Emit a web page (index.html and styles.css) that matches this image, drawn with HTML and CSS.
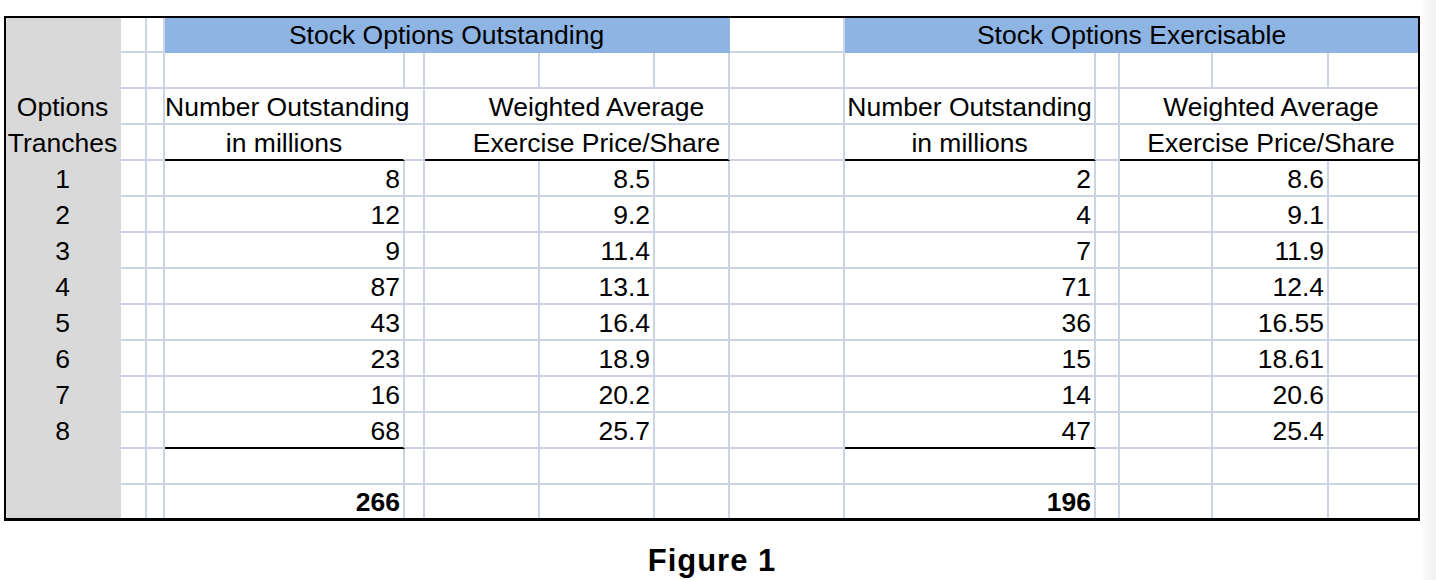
FILE: index.html
```html
<!DOCTYPE html>
<html lang="en">
<head>
<meta charset="utf-8">
<title>Figure 1 – Stock Options</title>
<link rel="stylesheet" href="styles.css">
</head>
<body>
<figure class="fig">
<table class="sheet">
  <colgroup>
    <col class="w-a"><col class="w-b"><col class="w-c"><col class="w-d"><col class="w-e">
    <col class="w-f"><col class="w-g"><col class="w-h"><col class="w-i"><col class="w-j">
    <col class="w-k"><col class="w-l"><col class="w-m"><col class="w-n">
  </colgroup>
  <tr class="r-top">
    <td class="a"></td><td></td><td></td>
    <td colspan="5" class="blue">Stock Options Outstanding</td>
    <td></td>
    <td colspan="5" class="blue last">Stock Options Exercisable</td>
  </tr>
  <tr>
    <td class="a"></td><td></td><td></td><td></td><td></td><td></td><td></td><td></td><td></td><td></td><td></td><td></td><td></td><td class="last"></td>
  </tr>
  <tr>
    <td class="a ctr">Options</td><td></td><td></td>
    <td colspan="2" class="ctr pad-de">Number Outstanding</td>
    <td colspan="3" class="ctr pad-fh">Weighted Average</td>
    <td></td>
    <td class="ctr">Number Outstanding</td>
    <td></td>
    <td colspan="3" class="ctr pad-ln last">Weighted Average</td>
  </tr>
  <tr>
    <td class="a ctr">Tranches</td><td></td><td></td>
    <td class="ctr ul hide-r">in millions</td><td></td>
    <td colspan="3" class="ctr pad-fh ul">Exercise Price/Share</td>
    <td></td>
    <td class="ctr ul">in millions</td>
    <td></td>
    <td colspan="3" class="ctr pad-ln ul last">Exercise Price/Share</td>
  </tr>
  <tr>
    <td class="a ctr">1</td><td></td><td></td><td class="num">8</td><td></td><td></td><td class="num">8.5</td><td></td><td></td><td class="num">2</td><td></td><td></td><td class="num">8.6</td><td class="last"></td>
  </tr>
  <tr>
    <td class="a ctr">2</td><td></td><td></td><td class="num">12</td><td></td><td></td><td class="num">9.2</td><td></td><td></td><td class="num">4</td><td></td><td></td><td class="num">9.1</td><td class="last"></td>
  </tr>
  <tr>
    <td class="a ctr">3</td><td></td><td></td><td class="num">9</td><td></td><td></td><td class="num">11.4</td><td></td><td></td><td class="num">7</td><td></td><td></td><td class="num">11.9</td><td class="last"></td>
  </tr>
  <tr>
    <td class="a ctr">4</td><td></td><td></td><td class="num">87</td><td></td><td></td><td class="num">13.1</td><td></td><td></td><td class="num">71</td><td></td><td></td><td class="num">12.4</td><td class="last"></td>
  </tr>
  <tr>
    <td class="a ctr">5</td><td></td><td></td><td class="num">43</td><td></td><td></td><td class="num">16.4</td><td></td><td></td><td class="num">36</td><td></td><td></td><td class="num">16.55</td><td class="last"></td>
  </tr>
  <tr>
    <td class="a ctr">6</td><td></td><td></td><td class="num">23</td><td></td><td></td><td class="num">18.9</td><td></td><td></td><td class="num">15</td><td></td><td></td><td class="num">18.61</td><td class="last"></td>
  </tr>
  <tr>
    <td class="a ctr">7</td><td></td><td></td><td class="num">16</td><td></td><td></td><td class="num">20.2</td><td></td><td></td><td class="num">14</td><td></td><td></td><td class="num">20.6</td><td class="last"></td>
  </tr>
  <tr>
    <td class="a ctr">8</td><td></td><td></td><td class="num ul">68</td><td></td><td></td><td class="num">25.7</td><td></td><td></td><td class="num ul">47</td><td></td><td></td><td class="num">25.4</td><td class="last"></td>
  </tr>
  <tr>
    <td class="a"></td><td></td><td></td><td></td><td></td><td></td><td></td><td></td><td></td><td></td><td></td><td></td><td></td><td class="last"></td>
  </tr>
  <tr class="r-total">
    <td class="a"></td><td></td><td></td><td class="num bold">266</td><td></td><td></td><td></td><td></td><td></td><td class="num bold">196</td><td></td><td></td><td></td><td class="last"></td>
  </tr>
</table>
<figcaption class="caption">Figure 1</figcaption>
</figure>
</body>
</html>
```

FILE: styles.css
```css
html, body {
  margin: 0;
  padding: 0;
}

body {
  background: linear-gradient(to right, #ffffff 0, #ffffff 1421px, #f8f8f8 1425px, #f0f0f0 100%);
  font-family: "Liberation Sans", Arial, sans-serif;
  color: #000;
}

.fig {
  margin: 16px 0 0 4px;
  width: 1416px;
}

.sheet {
  border-collapse: separate;
  border-spacing: 0;
  table-layout: fixed;
  width: 1416px;
  border-style: solid;
  border-color: #000;
  border-width: 2px 2px 3px 2px;
  font-size: 26.5px;
}

.w-a { width: 115px; }
.w-b { width: 26px; }
.w-c { width: 18px; }
.w-d { width: 240px; }
.w-e { width: 20px; }
.w-f { width: 115px; }
.w-g { width: 115px; }
.w-h { width: 75px; }
.w-i { width: 115px; }
.w-j { width: 251px; }
.w-k { width: 24px; }
.w-l { width: 93px; }
.w-m { width: 116px; }
.w-n { width: 89px; }

.sheet tr {
  height: 36px;
}

.sheet td {
  padding: 2px 0 0 0;
  vertical-align: top;
  line-height: 32px;
  white-space: nowrap;
  overflow: visible;
  border-right: 2px solid #ccd3e2;
  border-bottom: 2px solid #ccd3e2;
  background: #fff;
}

.sheet tr.r-top {
  height: 35px;
}

.sheet tr.r-top td {
  line-height: 31px;
  padding-top: 2px;
}

.sheet tr.r-total {
  height: 33px;
}

.sheet tr.r-total td {
  border-bottom: 0;
  line-height: 31px;
}

.sheet td.a {
  background: #d9d9d9;
  border-right-color: #d9d9d9;
  border-bottom-color: #d9d9d9;
}

.sheet td.blue {
  background: #8db4e2;
  border-right-color: #8db4e2;
  border-bottom-color: #8db4e2;
  text-align: center;
}

.sheet td.last {
  border-right: 0;
}

.sheet td.ctr {
  text-align: center;
}

.sheet td.num {
  text-align: right;
  padding-right: 3px;
}

.sheet td.bold {
  font-weight: 700;
}

.sheet td.pad-de {
  padding-right: 20px;
}

.sheet td.pad-fh {
  padding-left: 40px;
}

.sheet td.pad-ln {
  padding-left: 4px;
}

.sheet td.ul {
  border-bottom-color: #000;
}

.sheet td.hide-r {
  border-right-color: #fff;
}

.caption {
  text-align: center;
  font-weight: 700;
  font-size: 31px;
  letter-spacing: 1px;
  line-height: 36px;
  padding-top: 22px;
}
```
